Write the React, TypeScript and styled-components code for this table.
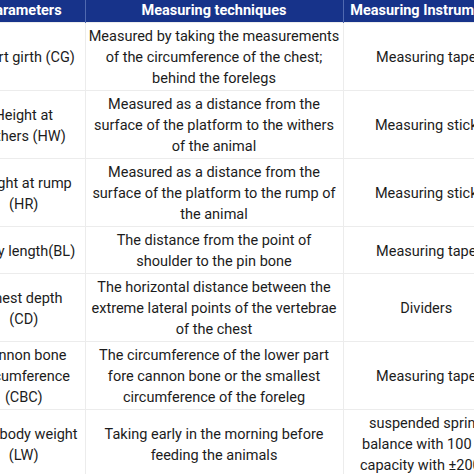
import styled, { createGlobalStyle } from 'styled-components';

const Global = createGlobalStyle`
  html, body {
    margin: 0;
    padding: 0;
    background: #ffffff;
    overflow: hidden;
  }
  body {
    font-family: Roboto, "Liberation Sans", Arial, sans-serif;
  }
`;

const Page = styled.div`
  width: 474px;
  height: 474px;
  overflow: hidden;
`;

const Table = styled.table`
  margin-left: -37px;
  width: 546px;
  table-layout: fixed;
  border-collapse: collapse;
  font-size: 14.5px;
  line-height: 21px;
  color: #1c1c1c;
`;

const HeadCell = styled.th`
  background: #17338a;
  color: #ffffff;
  font-weight: 700;
  text-align: center;
  padding: 0 4px 1px;
  white-space: nowrap;
  border-left: 1px solid #5069b0;
  &:first-child {
    border-left: none;
  }
`;

const Row = styled.tr`
  border-top: 1px solid #ececec;
`;

const Cell = styled.td`
  text-align: center;
  vertical-align: middle;
  padding: 3px 2px 1px;
  border-left: 1px solid #ececec;
  white-space: nowrap;
  &:first-child {
    border-left: none;
  }
`;

const rows: [string[], string[], string[]][] = [
  [
    ['Heart girth (CG)'],
    ['Measured by taking the measurements', 'of the circumference of the chest;', 'behind the forelegs'],
    ['Measuring tape'],
  ],
  [
    ['Height at', 'withers (HW)'],
    ['Measured as a distance from the', 'surface of the platform to the withers', 'of the animal'],
    ['Measuring stick'],
  ],
  [
    ['Height at rump', '(HR)'],
    ['Measured as a distance from the', 'surface of the platform to the rump of', 'the animal'],
    ['Measuring stick'],
  ],
  [
    ['Body length(BL)'],
    ['The distance from the point of', 'shoulder to the pin bone'],
    ['Measuring tape'],
  ],
  [
    ['Chest depth', '(CD)'],
    ['The horizontal distance between the', 'extreme lateral points of the vertebrae', 'of the chest'],
    ['Dividers'],
  ],
  [
    ['Cannon bone', 'circumference', '(CBC)'],
    ['The circumference of the lower part', 'fore cannon bone or the smallest', 'circumference of the foreleg'],
    ['Measuring tape'],
  ],
  [
    ['Live body weight', '(LW)'],
    ['Taking early in the morning before', 'feeding the animals'],
    ['suspended spring', 'balance with 100 kg', 'capacity with ±200 g'],
  ],
];

function Lines({ lines }: { lines: string[] }) {
  return (
    <>
      {lines.map((l, i) => (
        <span key={i}>
          {i > 0 && <br />}
          {l}
        </span>
      ))}
    </>
  );
}

export default function App() {
  return (
    <Page>
      <Global />
      <Table>
        <colgroup>
          <col style={{ width: 122 }} />
          <col style={{ width: 258 }} />
          <col style={{ width: 166 }} />
        </colgroup>
        <thead>
          <tr>
            <HeadCell>Parameters</HeadCell>
            <HeadCell>Measuring techniques</HeadCell>
            <HeadCell>Measuring Instruments</HeadCell>
          </tr>
        </thead>
        <tbody>
          {rows.map(([p, t, m], i) => (
            <Row key={i}>
              <Cell>
                <Lines lines={p} />
              </Cell>
              <Cell>
                <Lines lines={t} />
              </Cell>
              <Cell>
                <Lines lines={m} />
              </Cell>
            </Row>
          ))}
        </tbody>
      </Table>
    </Page>
  );
}
